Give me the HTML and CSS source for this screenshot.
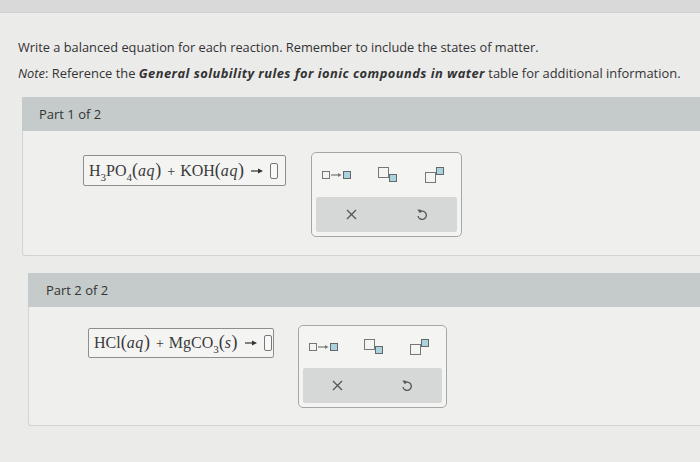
FILE: index.html
```html
<!DOCTYPE html>
<html>
<head>
<meta charset="utf-8">
<link rel="stylesheet" href="styles.css">
</head>
<body>
<div class="topbar"></div>
<div class="intro">
  <p class="line1">Write a balanced equation for each reaction. Remember to include the states of matter.</p>
  <p class="line2"><i>Note</i>: Reference the <b><i>General solubility rules for ionic compounds in water</i></b> table for additional information.</p>
</div>

<section class="part part1">
  <div class="part-head">Part 1 of 2</div>
  <div class="part-body">
    <div class="eq eq1"><span class="formula">H<sub>3</sub>PO<sub>4</sub><span class="par">(</span><i>aq</i><span class="par">)</span><span class="op">+</span>KOH<span class="par">(</span><i>aq</i><span class="par">)</span></span><svg class="arrow" width="12" height="6" viewBox="0 0 12 6"><line x1="0" y1="3" x2="8" y2="3" stroke="#333" stroke-width="1.2"/><path d="M7 0.5 L12 3 L7 5.5 Z" fill="#333"/></svg><span class="slot"></span></div>
    <div class="tools tools1">
      <div class="icons">
        <svg width="30" height="10" viewBox="0 0 30 10"><rect x="0.5" y="1.5" width="7" height="7" fill="none" stroke="#777" stroke-width="1"/><line x1="9" y1="5" x2="18" y2="5" stroke="#777" stroke-width="1.2"/><path d="M16 3 L19.5 5 L16 7 Z" fill="#777"/><rect x="21.5" y="1.5" width="7" height="7" fill="#a9d3df" stroke="#666" stroke-width="1"/></svg>
        <svg width="22" height="16" viewBox="0 0 22 16"><rect x="0.5" y="0.5" width="10" height="10" fill="none" stroke="#777" stroke-width="1"/><rect x="11.5" y="7.5" width="7" height="7" fill="#a9d3df" stroke="#666" stroke-width="1"/></svg>
        <svg width="22" height="16" viewBox="0 0 22 16"><rect x="0.5" y="5.5" width="10" height="10" fill="none" stroke="#777" stroke-width="1"/><rect x="11.5" y="0.5" width="7" height="7" fill="#a9d3df" stroke="#666" stroke-width="1"/></svg>
      </div>
      <div class="actions">
        <svg class="x" width="11" height="11" viewBox="0 0 11 11"><path d="M1 1 L10 10 M10 1 L1 10" stroke="#555" stroke-width="1.3"/></svg>
        <svg class="undo" width="12" height="13" viewBox="0 0 12 13"><path d="M3.2 4.2 A4.2 4.2 0 1 1 2 8" fill="none" stroke="#555" stroke-width="1.3"/><path d="M1.2 1.8 L4.6 5.2 L4.6 1.6 Z" fill="#555"/></svg>
      </div>
    </div>
  </div>
</section>

<section class="part part2">
  <div class="part-head">Part 2 of 2</div>
  <div class="part-body">
    <div class="eq eq2"><span class="formula">HCl<span class="par">(</span><i>aq</i><span class="par">)</span><span class="op">+</span>MgCO<sub>3</sub><span class="par">(</span><i>s</i><span class="par">)</span></span><svg class="arrow" width="12" height="6" viewBox="0 0 12 6"><line x1="0" y1="3" x2="8" y2="3" stroke="#333" stroke-width="1.2"/><path d="M7 0.5 L12 3 L7 5.5 Z" fill="#333"/></svg><span class="slot"></span></div>
    <div class="tools tools2">
      <div class="icons">
        <svg width="30" height="10" viewBox="0 0 30 10"><rect x="0.5" y="1.5" width="7" height="7" fill="none" stroke="#777" stroke-width="1"/><line x1="9" y1="5" x2="18" y2="5" stroke="#777" stroke-width="1.2"/><path d="M16 3 L19.5 5 L16 7 Z" fill="#777"/><rect x="21.5" y="1.5" width="7" height="7" fill="#a9d3df" stroke="#666" stroke-width="1"/></svg>
        <svg width="22" height="16" viewBox="0 0 22 16"><rect x="0.5" y="0.5" width="10" height="10" fill="none" stroke="#777" stroke-width="1"/><rect x="11.5" y="7.5" width="7" height="7" fill="#a9d3df" stroke="#666" stroke-width="1"/></svg>
        <svg width="22" height="16" viewBox="0 0 22 16"><rect x="0.5" y="5.5" width="10" height="10" fill="none" stroke="#777" stroke-width="1"/><rect x="11.5" y="0.5" width="7" height="7" fill="#a9d3df" stroke="#666" stroke-width="1"/></svg>
      </div>
      <div class="actions">
        <svg class="x" width="11" height="11" viewBox="0 0 11 11"><path d="M1 1 L10 10 M10 1 L1 10" stroke="#555" stroke-width="1.3"/></svg>
        <svg class="undo" width="12" height="13" viewBox="0 0 12 13"><path d="M3.2 4.2 A4.2 4.2 0 1 1 2 8" fill="none" stroke="#555" stroke-width="1.3"/><path d="M1.2 1.8 L4.6 5.2 L4.6 1.6 Z" fill="#555"/></svg>
      </div>
    </div>
  </div>
</section>
</body>
</html>
```
FILE: styles.css
```css
html, body {
  margin: 0;
  padding: 0;
  background: #ebebea;
  font-family: "Open Sans", "DejaVu Sans", sans-serif;
  color: #333;
}
body {
  width: 700px;
  height: 462px;
  overflow: hidden;
}
.topbar {
  height: 12px;
  background: #d9d9d9;
  border-bottom: 1px solid #d2d2d2;
}
.intro {
  padding-left: 18px;
  padding-top: 25px;
  font-size: 13px;
  line-height: 18px;
}
.intro p {
  margin: 0;
  white-space: nowrap;
}
.intro .line1 {
  font-size: 12.8px;
}
.intro .line2 {
  margin-top: 8px;
  font-size: 12.9px;
}
.intro b {
  font-weight: 700;
  letter-spacing: 0.45px;
}
.part {
  width: 672px;
  overflow: hidden;
}
.part1 {
  margin-top: 15px;
  margin-left: 22px;
  width: 678px;
}
.part2 {
  margin-top: 17px;
  margin-left: 28px;
}
.part-head {
  background: #c4cbca;
  height: 34px;
  display: flex;
  align-items: center;
  font-size: 13px;
  color: #333;
}
.part1 .part-head { padding-left: 17px; }
.part2 .part-head { padding-left: 18px; }
.part-body {
  border: 1px solid #d3d3d2;
  border-top: none;
  border-right: none;
  border-radius: 0 0 0 3px;
  background: #efefee;
  display: flex;
  align-items: flex-start;
}
.part1 .part-body { height: 124px; }
.part2 .part-body { height: 118px; }

.eq {
  border: 1px solid #8e8e8e;
  border-radius: 2px;
  background: #f4f4f3;
  color: #3a3a3a;
  display: flex;
  align-items: center;
  box-sizing: border-box;
  padding-left: 5px;
}
.formula {
  font-family: "Liberation Serif", "DejaVu Serif", serif;
  font-size: 16px;
  white-space: nowrap;
  line-height: 20px;
}
.formula sub {
  font-size: 11px;
  vertical-align: -5px;
  line-height: 0;
}
.formula i { font-style: italic; letter-spacing: 0.6px; }
.formula .par { font-size: 18px; }
.formula .op {
  font-size: 14px;
  margin: 0 5px 0 6px;
}
.arrow {
  margin-left: 7px;
  flex-shrink: 0;
}
.slot {
  display: inline-block;
  flex-shrink: 0;
  width: 6px;
  height: 14px;
  margin-left: 7px;
  border: 1px solid #777;
  border-radius: 2px;
  background: #f8f8f8;
}
.eq1 {
  margin-left: 60px;
  margin-top: 24px;
  width: 203px;
  height: 31px;
}
.eq2 {
  margin-left: 59px;
  margin-top: 21px;
  width: 186px;
  height: 30px;
}
.tools {
  border: 1px solid #a6a6a6;
  border-radius: 5px;
  background: #f4f4f3;
  box-sizing: border-box;
  display: flex;
  flex-direction: column;
}
.tools1 {
  margin-left: 25px;
  margin-top: 21px;
  width: 151px;
  height: 85px;
}
.tools2 {
  margin-left: 24px;
  margin-top: 18px;
  width: 149px;
  height: 83px;
}
.icons {
  flex: 1;
  display: flex;
  align-items: center;
  justify-content: space-between;
  padding: 0 14px 0 10px;
}
.actions {
  margin: 0 4px 4px 4px;
  height: 35px;
  background: #d6d8d8;
  border-radius: 2px;
  display: flex;
  align-items: center;
  justify-content: space-around;
}
```
